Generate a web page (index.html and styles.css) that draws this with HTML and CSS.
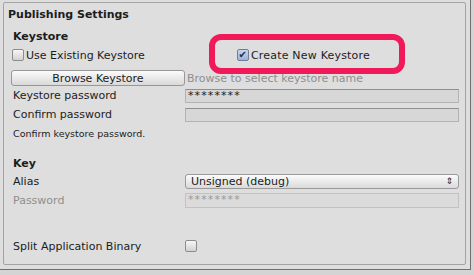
FILE: index.html
```html
<!DOCTYPE html>
<html lang="en">
<head>
    <meta charset="UTF-8">
    <title>Publishing Settings</title>
    <link rel="stylesheet" href="styles.css">
</head>
<body>
    <div class="frame">
        <div class="panel">
            <div class="title">Publishing Settings</div>

            <div class="heading">Keystore</div>
            <div class="row toggles">
                <label class="toggle"><span class="check"></span>Use Existing Keystore</label>
                <label class="toggle create"><span class="check checked">&#10004;</span>Create New Keystore</label>
            </div>
            <div class="row browse">
                <button class="btn">Browse Keystore</button>
                <span class="hint-gray">Browse to select keystore name</span>
            </div>
            <div class="row field-row">
                <span class="label">Keystore password</span>
                <div class="field">********</div>
            </div>
            <div class="row field-row">
                <span class="label">Confirm password</span>
                <div class="field"></div>
            </div>
            <div class="note">Confirm keystore password.</div>

            <div class="heading key">Key</div>
            <div class="row alias-row">
                <span class="label">Alias</span>
                <div class="dropdown">Unsigned (debug)<span class="arrows">&#8661;</span></div>
            </div>
            <div class="row pass-row">
                <span class="label disabled">Password</span>
                <div class="field off">********</div>
            </div>

            <div class="row split-row">
                <span class="label">Split Application Binary</span>
                <span class="check"></span>
            </div>

            <div class="highlight"></div>
        </div>
    </div>
</body>
</html>
```

FILE: styles.css
```css
/* Inspector look */
body {
    margin: 0;
    background-color: #d4d4d4;
    font-family: 'DejaVu Sans', 'Noto Sans', sans-serif;
    font-size: 11px;
    color: #1c1c1c;
}

.frame {
    width: 471px;
    height: 270px;
    box-sizing: border-box;
    padding: 2px 4px 0 3px;
    background-color: #dedede;
    border-right: 1px solid #6f6f6f;
    border-bottom: 1px solid #6f6f6f;
}

.panel {
    position: relative;
    height: 263px;
    box-sizing: border-box;
    border: 1px solid #a3a3a3;
    border-radius: 2px;
    padding: 0 6px 0 0;
}

.title {
    height: 23px;
    line-height: 23px;
    padding-left: 4px;
    font-weight: bold;
    font-size: 11px;
}

.heading {
    height: 22px;
    line-height: 22px;
    padding-left: 9px;
    font-weight: bold;
}

.heading.key {
    margin-top: 11px;
    height: 18px;
    line-height: 18px;
}

.row {
    display: flex;
    align-items: center;
}

.toggles {
    height: 14px;
    padding-left: 8px;
}

.toggle {
    display: flex;
    align-items: center;
    gap: 2px;
}

.toggle.create {
    margin-left: 92px;
    letter-spacing: 0.2px;
}

.check {
    width: 12px;
    height: 12px;
    box-sizing: border-box;
    border: 1px solid #8c8c8c;
    border-radius: 2px;
    background: linear-gradient(#f6f6f6, #d2d2d2);
    display: inline-flex;
    align-items: center;
    justify-content: center;
    font-size: 10px;
    line-height: 1;
    color: #1d2c55;
}

.check.checked {
    background: linear-gradient(#c9d6ea, #9db2d4);
    border-color: #6e7f9c;
}

.browse {
    margin-top: 8px;
    height: 16px;
    padding-left: 7px;
}

.btn {
    width: 174px;
    height: 16px;
    margin: 0;
    padding: 0;
    font-family: inherit;
    font-size: 11px;
    color: #1c1c1c;
    border: 1px solid #979797;
    border-radius: 3px;
    background: linear-gradient(#fbfbfb, #d9d9d9);
}

.hint-gray {
    margin-left: 2px;
    color: #8e8e8e;
}

.field-row {
    height: 19px;
}

.field-row:first-of-type {
    height: 20px;
}

.label {
    width: 172px;
    padding-left: 9px;
    flex-shrink: 0;
}

.label.disabled {
    color: #8e8e8e;
}

.field {
    flex: 1;
    height: 14px;
    box-sizing: border-box;
    background-color: #d7d7d7;
    border: 1px solid #b3b3b3;
    border-top-color: #8f8f8f;
    font-size: 11px;
    line-height: 12px;
    padding-left: 2px;
    letter-spacing: 1.1px;
}

.field.off {
    height: 15px;
    color: #9a9a9a;
    background-color: #dbdbdb;
    border-color: #c2c2c2;
}

.note {
    height: 20px;
    line-height: 20px;
    padding-left: 9px;
    font-size: 9.5px;
}

.alias-row {
    height: 16px;
}

.dropdown {
    flex: 1;
    height: 15px;
    box-sizing: border-box;
    display: flex;
    align-items: center;
    justify-content: space-between;
    padding: 0 5px;
    border: 1px solid #9a9a9a;
    border-radius: 3px;
    background: linear-gradient(#fbfbfb, #dadada);
}

.arrows {
    font-size: 9px;
}

.pass-row {
    height: 22px;
}

.split-row {
    margin-top: 26px;
    height: 18px;
}

/* annotation drawn over the panel */
.highlight {
    position: absolute;
    left: 205px;
    top: 31px;
    width: 196px;
    height: 40px;
    box-sizing: border-box;
    border: 6px solid #f0195a;
    border-radius: 12px;
}
```
